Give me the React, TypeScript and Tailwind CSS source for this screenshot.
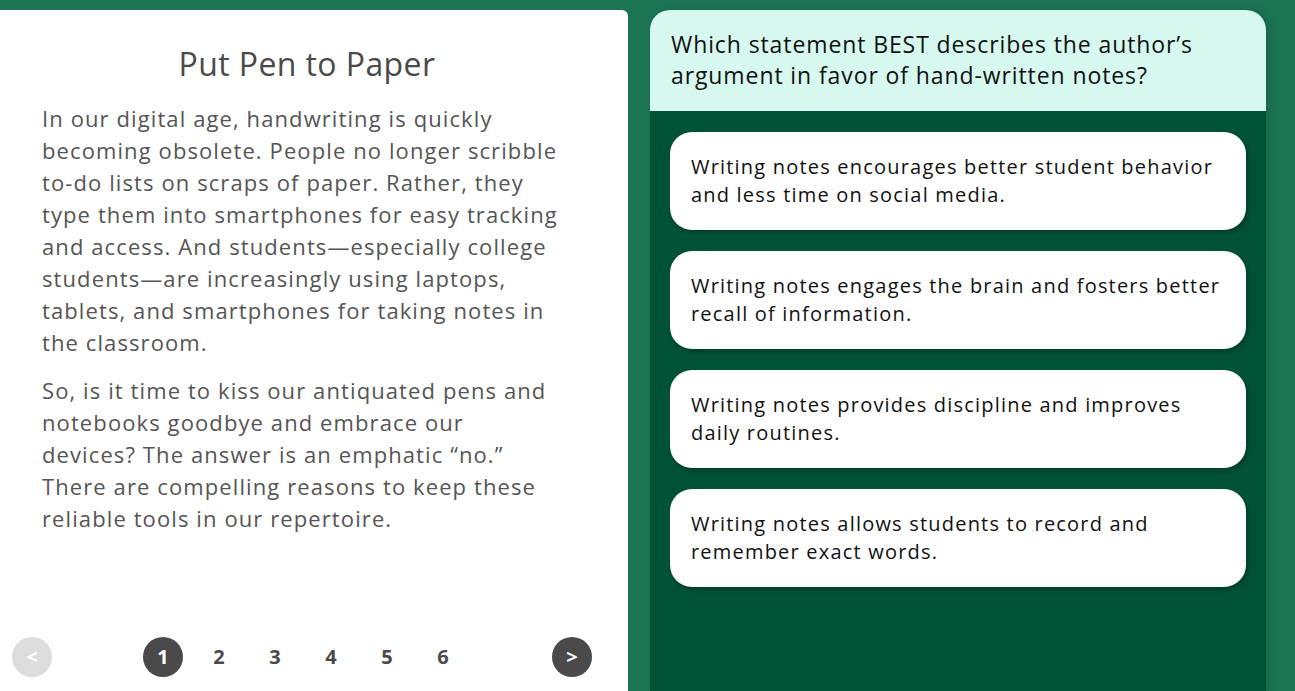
import React from 'react';

const options = [
  'Writing notes encourages better student behavior and less time on social media.',
  'Writing notes engages the brain and fosters better recall of information.',
  'Writing notes provides discipline and improves daily routines.',
  'Writing notes allows students to record and remember exact words.',
];

function PassagePanel() {
  return (
    <section className="flex h-full w-[628px] shrink-0 flex-col rounded-tr-md bg-white">
      <h1 className="mt-[33px] w-[614px] text-center text-[32px] font-medium leading-[42px] tracking-[0.4px] text-[#4a4a4a]">
        Put Pen to Paper
      </h1>
      <div className="ml-[42px] mt-[17px] w-[520px] text-[22px] leading-[32px] tracking-[1.1px] text-[#555]">
        <p>
          In our digital age, handwriting is quickly becoming obsolete. People no longer scribble
          to-do lists on scraps of paper. Rather, they type them into smartphones for easy tracking
          and access. And students—especially college students—are increasingly using laptops,
          tablets, and smartphones for taking notes in the classroom.
        </p>
        <p className="mt-[16px]">
          So, is it time to kiss our antiquated pens and notebooks goodbye and embrace our devices?
          The answer is an emphatic “no.” There are compelling reasons to keep these reliable tools
          in our repertoire.
        </p>
      </div>
      <nav className="mt-auto mb-[14px] flex items-center text-[20px] font-bold text-[#4a4a4a]">
        <button className="ml-[12px] flex h-[40px] w-[40px] items-center justify-center rounded-full bg-[#dcdcdc] text-white">
          &lt;
        </button>
        <div className="ml-[91px] flex">
          {[1, 2, 3, 4, 5, 6].map((n) => (
            <span
              key={n}
              className={
                n === 1
                  ? 'flex h-[40px] w-[40px] items-center justify-center rounded-full bg-[#4a4a4a] text-white'
                  : 'ml-[16px] flex h-[40px] w-[40px] items-center justify-center'
              }
            >
              {n}
            </span>
          ))}
        </div>
        <button className="ml-[89px] flex h-[40px] w-[40px] items-center justify-center rounded-full bg-[#4a4a4a] text-white">
          &gt;
        </button>
      </nav>
    </section>
  );
}

function QuestionPanel() {
  return (
    <section className="ml-[22px] flex h-full w-[616px] shrink-0 flex-col overflow-hidden rounded-t-[20px] bg-[#005237] shadow-[4px_0_8px_rgba(0,0,0,0.15)]">
      <header className="h-[101px] bg-[#d7f8ee] px-[21px] pt-[19px] text-[23px] leading-[31px] tracking-[0.9px] text-[#111]">
        Which statement BEST describes the author’s argument in favor of hand-written notes?
      </header>
      <ul className="flex flex-col gap-[21px] px-[20px] pt-[21px]">
        {options.map((o) => (
          <li
            key={o}
            className="flex h-[98px] items-center rounded-[22px] bg-white px-[21px] text-[20px] leading-[28px] tracking-[1.2px] text-[#111] shadow-[2px_3px_5px_rgba(0,0,0,0.25)]"
          >
            {o}
          </li>
        ))}
      </ul>
    </section>
  );
}

export default function App() {
  return (
    <div className="flex h-[691px] w-full overflow-hidden bg-[#1b7555] pt-[10px] font-['Open_Sans',sans-serif]">
      <PassagePanel />
      <QuestionPanel />
    </div>
  );
}
